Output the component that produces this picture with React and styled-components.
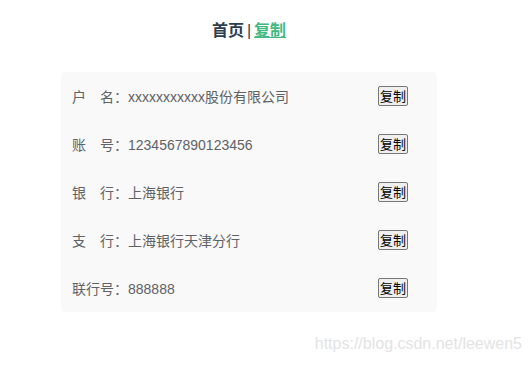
import React from 'react'
import styled, {createGlobalStyle} from 'styled-components'

//Global
const Global = createGlobalStyle`
    html, body { margin: 0; padding: 0; background: #fff; }
    body { font-family: "Liberation Sans", "Noto Sans CJK SC", sans-serif; }
`

//Styling
const Page = styled.div`
    position: relative;
    width: 498px;
    height: 365px;
`

const Nav = styled.div`
    padding-top: 21px;
    height: 20px;
    line-height: 20px;
    text-align: center;
    font-size: 16px;
    font-weight: bold;
    color: #2c3e50;
`

const NavLink = styled.a`
    color: ${props => props.active ? '#42b983' : '#2c3e50'};
    text-decoration: ${props => props.active ? 'underline' : 'none'};
`

const Sep = styled.span`
    font-weight: normal;
    margin: 0 3px;
`

const Panel = styled.div`
    width: 376px;
    margin: 31px auto 0;
    background: #f9f9f9;
    border-radius: 4px;
`

const Row = styled.div`
    height: 48px;
    display: flex;
    align-items: center;
    justify-content: space-between;
    padding: 0 29px 0 11px;
    font-size: 14px;
    color: #606266;
`

const Label = styled.span`
    white-space: pre;
    margin-top: -1px;
`

const CopyButton = styled.button`
    font-family: "Noto Sans CJK SC", sans-serif;
    font-size: 13px;
    line-height: 15px;
    height: 20px;
    padding: 0 1px;
    color: #000;
    background: #efefef;
    border: 1px solid #767676;
    border-radius: 2px;
    margin-top: -1px;
`

const Watermark = styled.div`
    position: absolute;
    right: -24px;
    top: 335px;
    font-size: 16px;
    color: #e3e3e3;
`

const rows = [
    ['户　名：', 'xxxxxxxxxxx股份有限公司'],
    ['账　号：', '1234567890123456'],
    ['银　行：', '上海银行'],
    ['支　行：', '上海银行天津分行'],
    ['联行号：', '888888'],
]

const App = () => {

    return (
        <Page>
            <Global/>
            <Nav>
                <NavLink>首页</NavLink>
                <Sep>|</Sep>
                <NavLink active>复制</NavLink>
            </Nav>
            <Panel>
                {rows.map(([label, value]) => (
                    <Row key={label}>
                        <Label>{label}{value}</Label>
                        <CopyButton>复制</CopyButton>
                    </Row>
                ))}
            </Panel>
            <Watermark>https://blog.csdn.net/leewen5</Watermark>
        </Page>
    )
}

export default App
